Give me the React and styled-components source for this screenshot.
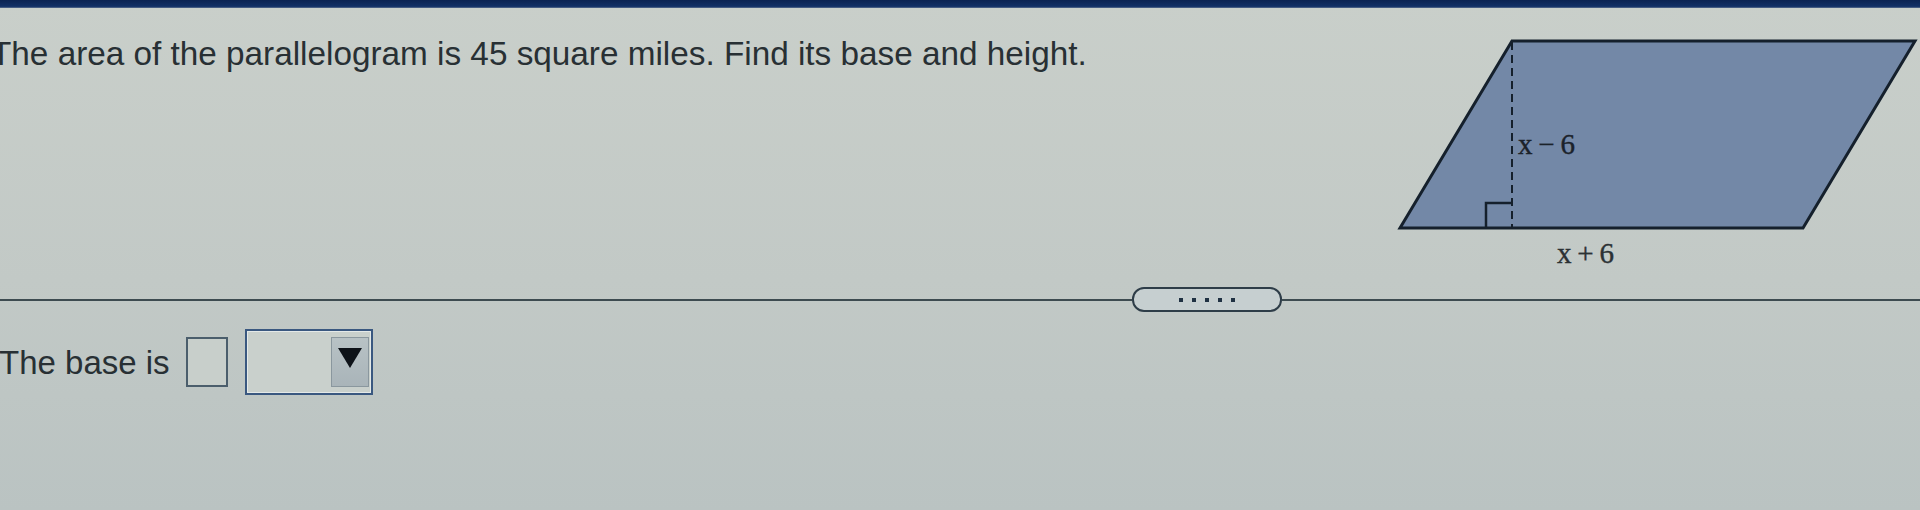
import React from "react";
import styled, { createGlobalStyle } from "styled-components";

const GlobalStyle = createGlobalStyle`
  html, body {
    margin: 0;
    padding: 0;
    width: 1920px;
    height: 510px;
    overflow: hidden;
    background: #c4cbc6;
  }
  body {
    font-family: "Liberation Sans", Arial, sans-serif;
  }
`;

const Page = styled.div`
  width: 1920px;
  height: 510px;
  display: flex;
  flex-direction: column;
  overflow: hidden;
  background: linear-gradient(180deg, #c9cfca 0%, #c2c9c6 55%, #bac3c2 100%);
  color: #283034;
`;

const TopBar = styled.div`
  height: 8px;
  flex: 0 0 8px;
  background: linear-gradient(180deg, #0b2352 0%, #123066 80%, #5b6f8e 100%);
`;

const Question = styled.div`
  height: 279px;
  flex: 0 0 279px;
  display: flex;
  justify-content: space-between;
  align-items: flex-start;
`;

// the first letter sits a little past the left edge, as in the capture
const Prompt = styled.p`
  margin: 29px 0 0 -9px;
  font-size: 33.3px;
  line-height: 1;
  white-space: nowrap;
`;

const Figure = styled.svg`
  margin-top: 22px;
  flex: 0 0 auto;
  display: block;
`;

const Divider = styled.div`
  height: 25px;
  display: flex;
  align-items: center;
`;

const Rule = styled.div`
  height: 2px;
  background: #3d4b50;
  flex: ${(p) => (p.$width ? `0 0 ${p.$width}px` : "1 1 auto")};
`;

const Handle = styled.div`
  flex: 0 0 150px;
  height: 25px;
  box-sizing: border-box;
  border: 2px solid #2e3d48;
  border-radius: 12px;
  background: #c6cfd0;
  display: flex;
  align-items: center;
  justify-content: center;
  gap: 9px;
`;

const Dot = styled.span`
  width: 4px;
  height: 4px;
  background: #1f3142;
`;

const Answer = styled.div`
  margin-top: 17px;
  height: 66px;
  display: flex;
  align-items: center;
`;

const Label = styled.span`
  margin-left: -1px;
  font-size: 33px;
  line-height: 1;
  white-space: nowrap;
`;

const Blank = styled.div`
  margin-left: 16px;
  width: 42px;
  height: 50px;
  box-sizing: border-box;
  border: 2px solid #4b5e6c;
  background: #c8cfcb;
`;

const Select = styled.div`
  margin-left: 17px;
  width: 128px;
  height: 66px;
  box-sizing: border-box;
  border: 2px solid #3a5880;
  box-shadow: inset 0 0 0 1px #e4e9e8;
  background: #c9d0cc;
  display: flex;
  justify-content: flex-end;
  align-items: center;
  padding-right: 2px;
`;

const Arrow = styled.div`
  width: 38px;
  height: 50px;
  box-sizing: border-box;
  border: 1px solid #8a979e;
  background: linear-gradient(180deg, #b8c2c5 0%, #a9b4b9 100%);
  display: flex;
  justify-content: center;
  padding-top: 10px;
`;

const Tri = styled.div`
  width: 0;
  height: 0;
  border-left: 12px solid transparent;
  border-right: 12px solid transparent;
  border-top: 20px solid #0d1218;
`;

const mathFont = "'Liberation Serif', 'Times New Roman', serif";

const Parallelogram = () => (
  <Figure width="526" height="240" viewBox="0 0 526 240">
    <polygon
      points="118,11 521,11 409,198 6,198"
      fill="#7388a7"
      stroke="#15202c"
      strokeWidth="3"
    />
    <line x1="118" y1="12" x2="118" y2="197" stroke="#15202c" strokeWidth="2" strokeDasharray="8 5" />
    <polyline points="92,198 92,173 118,173" fill="none" stroke="#15202c" strokeWidth="2.5" />
    <text x="124" y="124" fontFamily={mathFont} fontSize="29" fill="#1b222a" stroke="#1b222a" strokeWidth="0.4">
      x{"\u2009"}−{"\u2009"}6
    </text>
    <text x="163" y="233" fontFamily={mathFont} fontSize="29" fill="#2b3134" stroke="#2b3134" strokeWidth="0.4">
      x{"\u2009"}+{"\u2009"}6
    </text>
  </Figure>
);

export default function App() {
  return (
    <>
      <GlobalStyle />
      <Page>
        <TopBar />
        <Question>
          <Prompt>The area of the parallelogram is 45 square miles. Find its base and height.</Prompt>
          <Parallelogram />
        </Question>
        <Divider>
          <Rule $width={1132} />
          <Handle>
            {[0, 1, 2, 3, 4].map((i) => (
              <Dot key={i} />
            ))}
          </Handle>
          <Rule />
        </Divider>
        <Answer>
          <Label>The base is</Label>
          <Blank />
          <Select>
            <Arrow>
              <Tri />
            </Arrow>
          </Select>
        </Answer>
      </Page>
    </>
  );
}
